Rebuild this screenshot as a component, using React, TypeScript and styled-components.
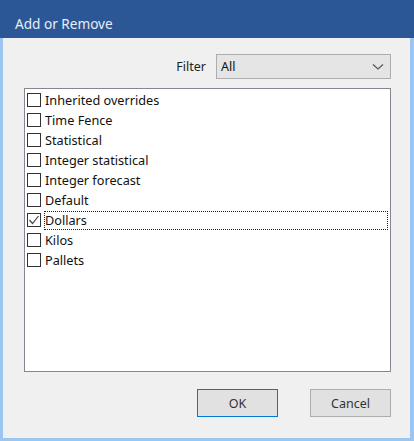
import React, { useState } from "react";
import styled, { createGlobalStyle } from "styled-components";

const Global = createGlobalStyle`
  html, body { margin: 0; padding: 0; background: #f0f0f0; }
  #root { width: 414px; height: 441px; }
  * { box-sizing: border-box; }
`;

const Window = styled.div`
  width: 414px;
  height: 441px;
  display: flex;
  flex-direction: column;
  background: #9cc6f2;
  padding: 0 4px 3px 3px;
  font-family: "Noto Sans", "Open Sans", sans-serif;
`;

const TitleBar = styled.div`
  height: 38px;
  margin: 0 -4px 0 -3px;
  background: #2b5797;
  color: #e9eef6;
  font-size: 13.6px;
  display: flex;
  align-items: center;
  padding: 8px 0 0 15px;
`;

const Body = styled.div`
  flex: 1;
  background: #f0f0f0;
  display: flex;
  flex-direction: column;
  padding: 16px 19px 0 21px;
`;

const FilterRow = styled.div`
  display: flex;
  justify-content: flex-end;
  align-items: center;
  gap: 10px;
  height: 25px;
`;

const Label = styled.span`
  font-size: 12.5px;
  color: #222;
`;

const Select = styled.div`
  width: 175px;
  height: 25px;
  background: #e5e5e5;
  border: 1px solid #adadad;
  display: flex;
  align-items: center;
  justify-content: space-between;
  padding: 0 6px 0 4px;
  font-size: 12.5px;
  color: #111;
`;

const ListBox = styled.div`
  margin-top: 9px;
  height: 284px;
  background: #fff;
  border: 1px solid #828790;
  padding: 1px 2px 0 2px;
  display: flex;
  flex-direction: column;
`;

const Row = styled.div`
  height: 20px;
  display: flex;
  align-items: center;
  gap: 4px;
`;

const Box = styled.div`
  width: 14px;
  height: 14px;
  border: 1px solid #333;
  background: #fff;
  flex: none;
  display: flex;
  align-items: center;
  justify-content: center;
`;

const ItemText = styled.span<{ $focused?: boolean }>`
  flex: 1;
  height: 19px;
  display: flex;
  align-items: center;
  font-size: 12.7px;
  color: #111;
  border: 1px dotted ${(p) => (p.$focused ? "#222" : "transparent")};
  margin-left: -1px;
`;

const Buttons = styled.div`
  display: flex;
  justify-content: flex-end;
  gap: 32px;
  margin-top: 17px;
`;

const Button = styled.button<{ $default?: boolean }>`
  width: 81px;
  height: 28px;
  background: #e1e1e1;
  border: 1px solid ${(p) => (p.$default ? "#0078d7" : "#adadad")};
  font-family: "Noto Sans", "Open Sans", sans-serif;
  font-size: 12.5px;
  color: #333;
  padding: 0;
`;

const items = [
  "Inherited overrides",
  "Time Fence",
  "Statistical",
  "Integer statistical",
  "Integer forecast",
  "Default",
  "Dollars",
  "Kilos",
  "Pallets",
];

export default function App() {
  const [checked] = useState<Record<string, boolean>>({ Dollars: true });
  return (
    <>
      <Global />
      <Window>
        <TitleBar>Add or Remove</TitleBar>
        <Body>
          <FilterRow>
            <Label>Filter</Label>
            <Select>
              <span>All</span>
              <svg width="12" height="8" viewBox="0 0 12 8">
                <path d="M1 1.5 L6 6 L11 1.5" fill="none" stroke="#555" strokeWidth="1.2" />
              </svg>
            </Select>
          </FilterRow>
          <ListBox>
            {items.map((it) => (
              <Row key={it}>
                <Box>
                  {checked[it] && (
                    <svg width="12" height="12" viewBox="0 0 12 12">
                      <path d="M1.5 6 L4.5 9.5 L10.5 2" fill="none" stroke="#444" strokeWidth="1.2" />
                    </svg>
                  )}
                </Box>
                <ItemText $focused={it === "Dollars"}>{it}</ItemText>
              </Row>
            ))}
          </ListBox>
          <Buttons>
            <Button $default>OK</Button>
            <Button>Cancel</Button>
          </Buttons>
        </Body>
      </Window>
    </>
  );
}
